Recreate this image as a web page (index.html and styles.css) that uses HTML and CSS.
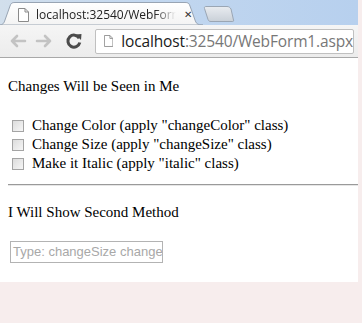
FILE: index.html
```html
<!DOCTYPE html>
<html>
<head>
<meta charset="utf-8">
<link rel="stylesheet" href="styles.css">
</head>
<body>
<div class="window">
  <div class="tabstrip">
    <div class="tab">
      <svg class="tab-bg" width="204" height="23" viewBox="0 0 204 23">
        <defs>
          <linearGradient id="tg" x1="0" y1="0" x2="0" y2="1">
            <stop offset="0" stop-color="#ffffff"/>
            <stop offset="1" stop-color="#f3f3f3"/>
          </linearGradient>
        </defs>
        <path d="M0 23 C4 23 5 21 6 18 L11 4 C12 1 13 0.5 16 0.5 L186 0.5 C189 0.5 190 1 191 4 L196 18 C197 21 198 23 204 23 Z" fill="url(#tg)" stroke="#98a4b3" stroke-width="1"/>
      </svg>
      <svg class="doc" width="11" height="14" viewBox="0 0 11 14"><path d="M0.5 0.5 H7 L10.5 4 V13.5 H0.5 Z M7 0.5 V4 H10.5" fill="#fff" stroke="#8a8a8a" stroke-width="1"/></svg>
      <span class="tab-title">localhost:32540/WebForm</span>
      <span class="tab-close">✕</span>
    </div>
    <div class="newtab">
      <svg width="32" height="18" viewBox="0 0 32 18">
        <defs>
          <linearGradient id="ng" x1="0" y1="0" x2="0" y2="1">
            <stop offset="0" stop-color="#e9ecf0"/>
            <stop offset="1" stop-color="#c9d0d8"/>
          </linearGradient>
        </defs>
        <path d="M3 1.5 H24 C26 1.5 27 2.5 28 4 L30.5 15 C31 16.5 30 16.5 29 16.5 H8 C6.5 16.5 5.5 16 5 14.5 L1.5 3.5 C1 2 2 1.5 3 1.5 Z" fill="url(#ng)" stroke="#9aa6b4" stroke-width="1"/>
      </svg>
    </div>
  </div>
  <div class="toolbar">
    <svg class="nav" width="20" height="16" viewBox="0 0 20 16"><path d="M17 8 H4 M9 3 L4 8 L9 13" fill="none" stroke="#c3c3c3" stroke-width="2.6" stroke-linecap="round" stroke-linejoin="round"/></svg>
    <svg class="nav" width="20" height="16" viewBox="0 0 20 16"><path d="M3 8 H16 M11 3 L16 8 L11 13" fill="none" stroke="#c3c3c3" stroke-width="2.6" stroke-linecap="round" stroke-linejoin="round"/></svg>
    <svg class="nav reload" width="18" height="18" viewBox="0 0 18 18"><path d="M14.2 6.2 A6 6 0 1 0 14.8 10.5" fill="none" stroke="#4a4a4a" stroke-width="3"/><path d="M10.5 2.5 L16.5 2 L16 8 Z" fill="#4a4a4a"/></svg>
    <div class="omnibox">
      <svg class="doc" width="11" height="14" viewBox="0 0 11 14"><path d="M0.5 0.5 H7 L10.5 4 V13.5 H0.5 Z M7 0.5 V4 H10.5" fill="#fff" stroke="#8a8a8a" stroke-width="1"/></svg>
      <span class="url"><span class="host">localhost</span>:32540/WebForm1.aspx</span>
    </div>
  </div>
  <div class="content">
    <p class="lead">Changes Will be Seen in Me</p>
    <div class="options">
      <label class="opt"><span class="box"></span>Change Color (apply "changeColor" class)</label>
      <label class="opt"><span class="box"></span>Change Size (apply "changeSize" class)</label>
      <label class="opt"><span class="box"></span>Make it Italic (apply "italic" class)</label>
    </div>
    <div class="rule"></div>
    <p class="lead second">I Will Show Second Method</p>
    <div class="field">Type: changeSize change</div>
  </div>
</div>
</body>
</html>
```
FILE: styles.css
```css
html, body {
  margin: 0;
  padding: 0;
  background: #f7eded;
}
.window {
  width: 358px;
  height: 282px;
  background: #ffffff;
  overflow: hidden;
}
.tabstrip {
  height: 25px;
  background: linear-gradient(to right, #d2dfec 0%, #c2d7ef 40%, #b7d0ee 100%);
  display: flex;
  align-items: flex-end;
  padding-left: 0;
}
.tab {
  position: relative;
  width: 204px;
  height: 23px;
  display: flex;
  align-items: center;
  padding-left: 19px;
  box-sizing: border-box;
  margin-left: -1px;
}
.tab-bg {
  position: absolute;
  left: 0;
  top: 0;
}
.tab .doc {
  position: relative;
  margin-top: 2px;
}
.tab-title {
  position: relative;
  margin-left: 7px;
  font-family: "Open Sans", "DejaVu Sans", sans-serif;
  font-size: 12px;
  color: #222;
  width: 140px;
  white-space: nowrap;
  overflow: hidden;
  margin-top: 2px;
  -webkit-mask-image: linear-gradient(to right, #000 85%, transparent 100%);
}
.tab-close {
  position: relative;
  margin-left: 8px;
  margin-top: 2px;
  font-family: "DejaVu Sans", sans-serif;
  font-size: 10px;
  font-weight: bold;
  color: #333;
}
.newtab {
  margin-left: 0;
  height: 23px;
  display: flex;
  align-items: center;
}
.toolbar {
  height: 32px;
  background: linear-gradient(#f5f5f5, #ececec);
  border-bottom: 1px solid #a8a8a8;
  display: flex;
  align-items: center;
  padding-left: 8px;
}
.nav {
  margin-right: 6px;
}
.nav.reload {
  margin-left: 5px;
  margin-right: 12px;
}
.omnibox {
  width: 259px;
  height: 25px;
  box-sizing: border-box;
  background: #fff;
  border: 1px solid #c0c0c0;
  border-radius: 2px;
  display: flex;
  align-items: center;
  padding-left: 8px;
}
.omnibox .doc {
  margin-right: 8px;
}
.url {
  font-family: "Open Sans", "DejaVu Sans", sans-serif;
  font-size: 15.5px;
  color: #777;
  white-space: nowrap;
  letter-spacing: -0.15px;
}
.url .host {
  color: #1a1a1a;
}
.content {
  padding: 20px 0 0 8px;
  font-family: "Liberation Serif", "Times New Roman", serif;
  font-size: 15px;
  color: #000;
}
.lead {
  margin: 0;
  line-height: 17px;
}
.options {
  margin-top: 21px;
  display: flex;
  flex-direction: column;
  gap: 0;
}
.opt {
  display: flex;
  align-items: center;
  height: 19px;
  line-height: 17px;
}
.box {
  width: 10px;
  height: 10px;
  border: 1px solid #a4a4a4;
  background: linear-gradient(135deg, #dcdcdc, #f6f6f6);
  margin-left: 4px;
  margin-right: 8px;
  flex: none;
}
.rule {
  margin-top: 11px;
  width: 350px;
  height: 0;
  border-top: 1px solid #9a9a9a;
  border-bottom: 1px solid #e6e6e6;
}
.second {
  margin-top: 18px;
}
.field {
  margin-top: 20px;
  margin-left: 2px;
  width: 153px;
  height: 22px;
  box-sizing: border-box;
  border: 1px solid #b3b3b3;
  font-family: "Liberation Sans", Arial, sans-serif;
  font-size: 13px;
  color: #a8a8a8;
  padding-left: 2px;
  line-height: 20px;
  white-space: nowrap;
  overflow: hidden;
}
```
